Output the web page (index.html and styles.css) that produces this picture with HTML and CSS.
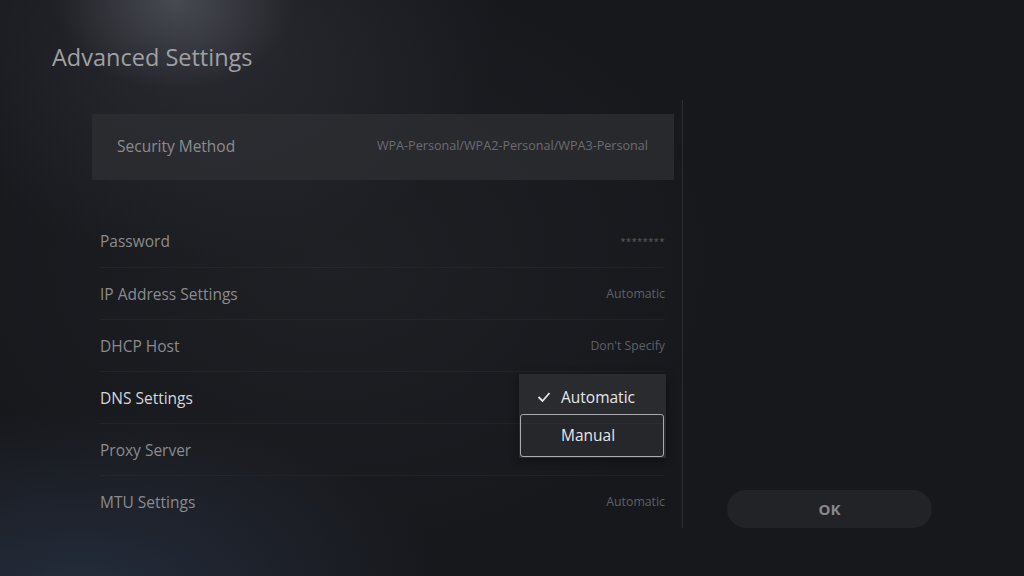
FILE: index.html
```html
<!DOCTYPE html>
<html lang="en">
<head>
<meta charset="utf-8">
<title>Advanced Settings</title>
<link rel="stylesheet" href="styles.css">
</head>
<body>
<div class="screen">
  <h1 class="title">Advanced Settings</h1>
  <div class="main">
    <div class="list">
      <div class="security">
        <span class="sec-label">Security Method</span>
        <span class="sec-value">WPA-Personal/WPA2-Personal/WPA3-Personal</span>
      </div>
      <div class="rows">
        <div class="row"><span class="label">Password</span><span class="value stars">********</span></div>
        <div class="row"><span class="label">IP Address Settings</span><span class="value">Automatic</span></div>
        <div class="row"><span class="label">DHCP Host</span><span class="value">Don't Specify</span></div>
        <div class="row row-active">
          <span class="label label-active">DNS Settings</span>
          <div class="dropdown">
            <div class="option option-checked">
              <svg class="check" width="14" height="12" viewBox="0 0 14 12"><polyline points="1.5,6 5.5,10 12.5,2" fill="none" stroke="#e6e6e6" stroke-width="1.8"/></svg>
              <span>Automatic</span>
            </div>
            <div class="option option-focus"><span>Manual</span></div>
          </div>
        </div>
        <div class="row"><span class="label">Proxy Server</span><span class="value"></span></div>
        <div class="row"><span class="label">MTU Settings</span><span class="value">Automatic</span></div>
      </div>
    </div>
    <div class="divider"></div>
    <div class="side">
      <button class="ok">OK</button>
    </div>
  </div>
</div>
</body>
</html>
```
FILE: styles.css
```css
html, body {
  margin: 0;
  padding: 0;
}
body {
  width: 1024px;
  height: 576px;
  overflow: hidden;
  background: #17181c;
  font-family: "Open Sans", "Liberation Sans", sans-serif;
}
.screen {
  width: 1024px;
  height: 576px;
  box-sizing: border-box;
  padding: 43px 0 0 52px;
  display: flex;
  flex-direction: column;
  background:
    radial-gradient(ellipse 120px 90px at 175px 0px, rgba(95,97,108,0.6), rgba(95,97,108,0) 100%),
    radial-gradient(ellipse 300px 220px at 200px 40px, rgba(60,62,70,0.45), rgba(60,62,70,0) 100%),
    radial-gradient(ellipse 360px 180px at 80px 590px, rgba(45,58,80,0.6), rgba(45,58,80,0) 100%),
    radial-gradient(ellipse 400px 300px at 330px 260px, rgba(38,40,45,0.5), rgba(38,40,45,0) 100%),
    #17181c;
}
.title {
  margin: 0;
  font-weight: 400;
  font-size: 23.5px;
  line-height: 28px;
  color: #a0a0a3;
}
.main {
  margin-top: 29px;
  margin-left: 40px;
  height: 428px;
  display: flex;
}
.list {
  width: 582px;
  padding-top: 14px;
}
.security {
  height: 66px;
  background: rgba(46,47,51,0.75);
  display: flex;
  align-items: center;
  justify-content: space-between;
  padding: 0 26px 3px 25px;
  box-sizing: border-box;
}
.sec-label {
  font-size: 15.5px;
  color: #8c8c8f;
}
.sec-value {
  font-size: 12.6px;
  color: #6b6c6f;
}
.rows {
  margin: 35px 9px 0 8px;
}
.row {
  position: relative;
  height: 52px;
  display: flex;
  align-items: center;
  justify-content: space-between;
  border-top: 1px solid rgba(255,255,255,0.035);
  box-sizing: border-box;
}
.row:first-child {
  border-top: none;
}
.label {
  font-size: 15.5px;
  color: #8a8b8e;
}
.label-active {
  color: #d6d6d8;
}
.value {
  font-size: 12.3px;
  color: #5f6064;
}
.stars {
  font-size: 9px;
  letter-spacing: 0.6px;
}
.dropdown {
  position: absolute;
  right: -1px;
  top: 2px;
  width: 147px;
  box-sizing: border-box;
  padding: 0 2px 1px 1px;
  background: #2a2b2f;
  box-shadow: 0 2px 8px rgba(0,0,0,0.4);
}
.option {
  height: 38px;
  display: flex;
  align-items: center;
  padding-left: 41px;
  font-size: 15.5px;
  color: #e6e6e8;
  box-sizing: border-box;
}
.option-checked {
  position: relative;
  height: 40px;
  padding-top: 5px;
}
.check {
  position: absolute;
  left: 17px;
  top: 17px;
}
.option-focus {
  height: 43px;
  border: 1.5px solid #a9a9b0;
  border-radius: 3px;
  padding-left: 40px;
  padding-bottom: 1px;
  background: #26272b;
}
.divider {
  width: 1px;
  margin-left: 8px;
  background: #2c2d31;
}
.side {
  flex: 1;
  display: flex;
  align-items: flex-end;
  padding-left: 44px;
}
.ok {
  width: 205px;
  height: 38px;
  border: none;
  border-radius: 19px;
  background: #222327;
  color: #88888b;
  font-family: "Open Sans", "Liberation Sans", sans-serif;
  font-weight: 700;
  font-size: 15px;
  padding: 0;
}
```
